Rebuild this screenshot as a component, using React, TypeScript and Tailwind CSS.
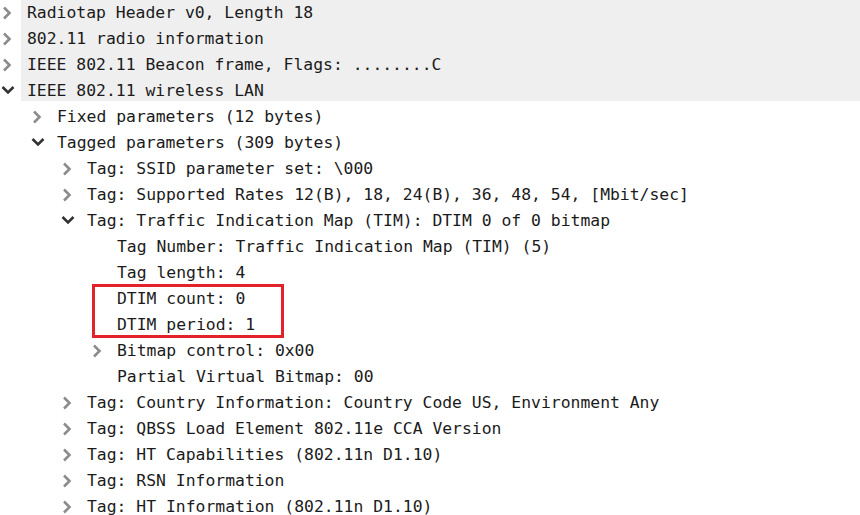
import React from "react";

type Row = { level: number; text: string; state: "c" | "e" | "n"; header?: boolean };

const rows: Row[] = [
  { level: 0, text: "Radiotap Header v0, Length 18", state: "c", header: true },
  { level: 0, text: "802.11 radio information", state: "c", header: true },
  { level: 0, text: "IEEE 802.11 Beacon frame, Flags: ........C", state: "c", header: true },
  { level: 0, text: "IEEE 802.11 wireless LAN", state: "e", header: true },
  { level: 1, text: "Fixed parameters (12 bytes)", state: "c" },
  { level: 1, text: "Tagged parameters (309 bytes)", state: "e" },
  { level: 2, text: "Tag: SSID parameter set: \\000", state: "c" },
  { level: 2, text: "Tag: Supported Rates 12(B), 18, 24(B), 36, 48, 54, [Mbit/sec]", state: "c" },
  { level: 2, text: "Tag: Traffic Indication Map (TIM): DTIM 0 of 0 bitmap", state: "e" },
  { level: 3, text: "Tag Number: Traffic Indication Map (TIM) (5)", state: "n" },
  { level: 3, text: "Tag length: 4", state: "n" },
  { level: 3, text: "DTIM count: 0", state: "n" },
  { level: 3, text: "DTIM period: 1", state: "n" },
  { level: 3, text: "Bitmap control: 0x00", state: "c" },
  { level: 3, text: "Partial Virtual Bitmap: 00", state: "n" },
  { level: 2, text: "Tag: Country Information: Country Code US, Environment Any", state: "c" },
  { level: 2, text: "Tag: QBSS Load Element 802.11e CCA Version", state: "c" },
  { level: 2, text: "Tag: HT Capabilities (802.11n D1.10)", state: "c" },
  { level: 2, text: "Tag: RSN Information", state: "c" },
  { level: 2, text: "Tag: HT Information (802.11n D1.10)", state: "c" },
];

function Chevron({ state }: { state: "c" | "e" | "n" }) {
  if (state === "n") return <span className="w-[26px] shrink-0" />;
  if (state === "c")
    return (
      <span className="w-[26px] shrink-0 flex items-center">
        <svg width="14" height="14" viewBox="0 0 14 14" className="ml-[0px]">
          <polyline points="3,1.5 8.5,7 3,12.5" fill="none" stroke="#8c8c8c" strokeWidth="2.6" />
        </svg>
      </span>
    );
  return (
    <span className="w-[26px] shrink-0 flex items-center">
      <svg width="14" height="14" viewBox="0 0 14 14" className="-mt-[3px]">
        <polyline points="1.5,4 7,9.5 12.5,4" fill="none" stroke="#333333" strokeWidth="2.6" />
      </svg>
    </span>
  );
}

const indentClass = ["pl-[1px]", "pl-[31px]", "pl-[61px]", "pl-[91px]"];

export default function App() {
  return (
    <div
      className="w-[860px] h-[515px] bg-white overflow-hidden text-[#1b1b1b] relative"
      style={{ fontFamily: '"DejaVu Sans Mono", "Liberation Mono", monospace' }}
    >
      <div className="flex flex-col">
        {rows.map((r, i) => (
          <div key={i} className={`h-[26px] flex items-center ${indentClass[r.level]}`}>
            <Chevron state={r.state} />
            <span
              className={`h-full flex items-center text-[16.4px] whitespace-pre ${
                r.header ? "flex-1 bg-[#efefef] -ml-[6px] pl-[6px]" : ""
              } ${i === 3 ? "border-b-[3px] border-white pt-[3px]" : ""}`}
            >
              {r.text}
            </span>
          </div>
        ))}
      </div>
      <div className="absolute left-[92px] top-[284px] w-[192px] h-[54px] border-[3px] border-[#e3222a]" />
    </div>
  );
}
